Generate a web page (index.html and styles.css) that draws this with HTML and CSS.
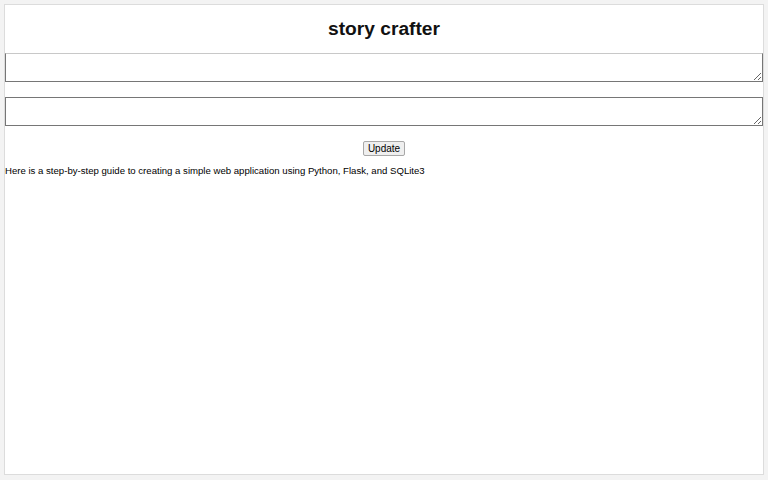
FILE: index.html
```html
<!DOCTYPE html>
<html lang="en">
<head>
    <meta charset="UTF-8">
    <meta name="viewport" content="width=device-width, initial-scale=1.0">
    <title>story crafter</title>
    <link rel="stylesheet" href="styles.css">
</head>
<body>
    <div class="app">
        <header class="app-header">
            <h1>story crafter</h1>
        </header>
        <textarea class="prompt first"></textarea>
        <textarea class="prompt"></textarea>
        <div class="actions">
            <button type="button">Update</button>
        </div>
        <p class="output">Here is a step-by-step guide to creating a simple web application using Python, Flask, and SQLite3</p>
    </div>
</body>
</html>
```
FILE: styles.css
```css
html, body {
    margin: 0;
    padding: 0;
}
body {
    padding: 4px;
    background-color: #f3f3f3;
    font-family: "Liberation Sans", Arial, sans-serif;
}
.app {
    box-sizing: border-box;
    height: 471px;
    background-color: #fff;
    border: 1px solid #dcdcdc;
}
.app-header {
    height: 48px;
    display: flex;
    align-items: center;
    justify-content: center;
}
.app-header h1 {
    margin: 0;
    font-size: 19.2px;
    font-weight: bold;
    color: #111;
}
.prompt {
    display: block;
    box-sizing: border-box;
    width: 100%;
    height: 29px;
    margin: 0 0 15px 0;
    padding: 2px;
    border: 1px solid #767676;
    font-family: "Liberation Sans", Arial, sans-serif;
}
.prompt.first {
    border-top-color: #c8c8c8;
}
.actions {
    display: flex;
    justify-content: center;
}
.actions button {
    font-family: "Liberation Sans", Arial, sans-serif;
    font-size: 10px;
    line-height: 11px;
    padding: 1px 4px;
    color: #000;
    background-color: #efefef;
    border: 1px solid #a8a8a8;
    border-radius: 2px;
}
.output {
    margin: 9px 0 0 0;
    font-size: 9.6px;
    line-height: 12px;
    color: #000;
}
```
